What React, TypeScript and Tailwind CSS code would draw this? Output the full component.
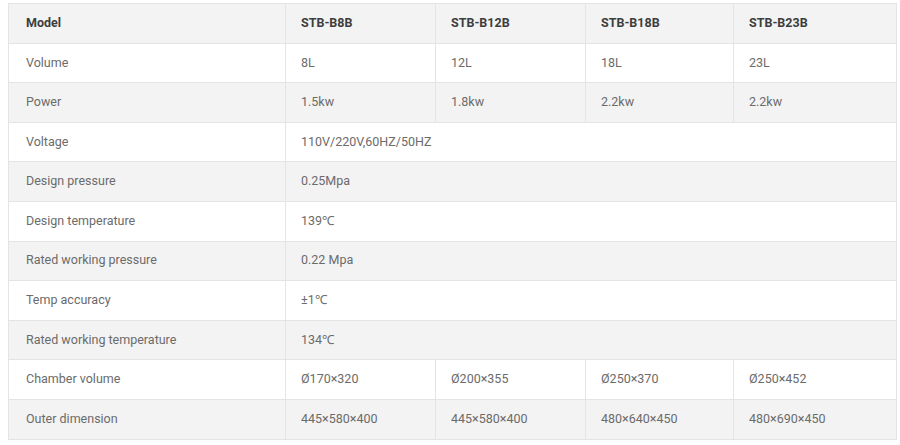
const models = ['STB-B8B', 'STB-B12B', 'STB-B18B', 'STB-B23B']

type Row = { label: string; values: string[] }

const rows: Row[] = [
  { label: 'Volume', values: ['8L', '12L', '18L', '23L'] },
  { label: 'Power', values: ['1.5kw', '1.8kw', '2.2kw', '2.2kw'] },
  { label: 'Voltage', values: ['110V/220V,60HZ/50HZ'] },
  { label: 'Design pressure', values: ['0.25Mpa'] },
  { label: 'Design temperature', values: ['139℃'] },
  { label: 'Rated working pressure', values: ['0.22 Mpa'] },
  { label: 'Temp accuracy', values: ['±1℃'] },
  { label: 'Rated working temperature', values: ['134℃'] },
  { label: 'Chamber volume', values: ['Ø170×320', 'Ø200×355', 'Ø250×370', 'Ø250×452'] },
  { label: 'Outer dimension', values: ['445×580×400', '445×580×400', '480×640×450', '480×690×450'] },
]

export default function App() {
  return (
    <div className="w-[900px] h-[445px] bg-white pt-[3px] pl-[8px] font-['Roboto',sans-serif]">
      <table className="w-[888px] table-fixed border-collapse text-[12.5px] text-[#6b6b6b]">
        <colgroup>
          <col className="w-[277px]" />
          <col className="w-[150px]" />
          <col className="w-[150px]" />
          <col className="w-[148px]" />
          <col className="w-[163px]" />
        </colgroup>
        <thead>
          <tr className="h-[39.6px] bg-[#f3f3f3]">
            <th className="border border-[#e4e4e4] pl-[17px] text-left font-bold text-[#3d3d3d]">Model</th>
            {models.map((m) => (
              <th key={m} className="border border-[#e4e4e4] pl-[15px] text-left font-bold text-[#3d3d3d]">
                {m}
              </th>
            ))}
          </tr>
        </thead>
        <tbody>
          {rows.map((row, i) => (
            <tr key={row.label} className={i % 2 === 0 ? 'h-[39.6px] bg-white' : 'h-[39.6px] bg-[#f3f3f3]'}>
              <td className="border border-[#e4e4e4] pl-[17px]">{row.label}</td>
              {row.values.length === 1 ? (
                <td colSpan={4} className="border border-[#e4e4e4] pl-[15px]">
                  {row.values[0]}
                </td>
              ) : (
                row.values.map((v, j) => (
                  <td key={j} className="border border-[#e4e4e4] pl-[15px]">
                    {v}
                  </td>
                ))
              )}
            </tr>
          ))}
        </tbody>
      </table>
    </div>
  )
}
